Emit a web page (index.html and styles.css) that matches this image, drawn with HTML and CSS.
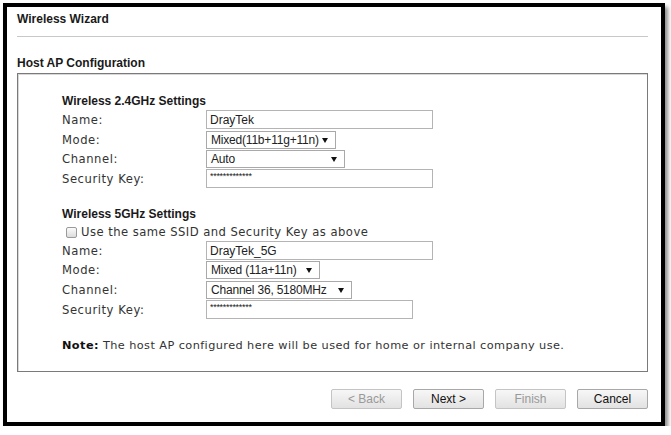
FILE: index.html
```html
<!DOCTYPE html>
<html>
<head>
<meta charset="utf-8">
<link rel="stylesheet" href="styles.css">
</head>
<body>
<div class="frame">
  <div class="title">Wireless Wizard</div>
  <div class="rule"></div>
  <div class="section-title">Host AP Configuration</div>
  <div class="box">
    <div class="group-title">Wireless 2.4GHz Settings</div>
    <div class="form">
      <div class="lbl">Name:</div>
      <div class="ctl"><input class="txt w227" type="text" value="DrayTek"></div>
      <div class="lbl">Mode:</div>
      <div class="ctl"><span class="sel w130">Mixed(11b+11g+11n)</span></div>
      <div class="lbl">Channel:</div>
      <div class="ctl"><span class="sel w139">Auto</span></div>
      <div class="lbl">Security Key:</div>
      <div class="ctl"><input class="txt key w227" type="text" value="*************"></div>
    </div>

    <div class="group-title g2">Wireless 5GHz Settings</div>
    <label class="check"><span class="cb"></span>Use the same SSID and Security Key as above</label>
    <div class="form">
      <div class="lbl">Name:</div>
      <div class="ctl"><input class="txt w227" type="text" value="DrayTek_5G"></div>
      <div class="lbl">Mode:</div>
      <div class="ctl"><span class="sel w114">Mixed (11a+11n)</span></div>
      <div class="lbl">Channel:</div>
      <div class="ctl"><span class="sel w146">Channel 36, 5180MHz</span></div>
      <div class="lbl">Security Key:</div>
      <div class="ctl"><input class="txt key w207" type="text" value="*************"></div>
    </div>

    <p class="note"><b>Note:</b> The host AP configured here will be used for home or internal company use.</p>
  </div>
  <div class="buttons">
    <button class="btn" disabled>&lt; Back</button>
    <button class="btn">Next &gt;</button>
    <button class="btn" disabled>Finish</button>
    <button class="btn">Cancel</button>
  </div>
</div>
</body>
</html>
```

FILE: styles.css
```css
html, body {
  margin: 0;
  padding: 0;
  background: #fff;
}
body {
  font-family: "Liberation Sans", Arial, sans-serif;
  font-size: 12px;
  color: #222;
}
.frame {
  margin: 3px 0 0 3px;
  height: 415px;
  border: 4px solid #000;
  box-shadow: 3px 4px 4px rgba(0, 0, 0, 0.45);
  padding: 0 13px 0 10px;
  box-sizing: content-box;
  width: 631px;
}
.title {
  font-weight: bold;
  padding-top: 5px;
  height: 19px;
  line-height: 14px;
  color: #1a1a1a;
}
.rule {
  height: 1px;
  background: #c8c8c8;
  margin-top: 5px;
}
.section-title {
  font-weight: bold;
  margin-top: 19px;
  line-height: 14px;
  height: 17px;
  color: #1a1a1a;
}
.box {
  border: 1px solid #7a7a7a;
  box-shadow: inset 1px 1px 0 #d8d8d8;
  padding: 20px 0 0 44px;
  box-sizing: content-box;
  height: 277px;
}
.group-title {
  font-weight: bold;
  line-height: 14px;
  height: 16px;
  color: #1a1a1a;
}
.group-title.g2 {
  margin-top: 18px;
}
.form {
  display: grid;
  grid-template-columns: 144px auto;
  grid-auto-rows: 19.7px;
  align-items: center;
  font-family: "DejaVu Sans", Verdana, sans-serif;
  color: #333;
}
.lbl {
  font-size: 11.6px;
  line-height: 14px;
  letter-spacing: 0.55px;
}
.ctl {
  display: flex;
  align-items: center;
}
.txt {
  height: 19px;
  box-sizing: border-box;
  border: 1px solid #b4b4b4;
  padding: 0 3px;
  font-family: "Liberation Sans", Arial, sans-serif;
  font-size: 12px;
  color: #222;
  margin: 0;
  outline: none;
}
.txt.key {
  font-size: 9px;
  padding-bottom: 6px;
  letter-spacing: -0.3px;
}
.w227 { width: 227px; }
.w207 { width: 207px; }
.sel {
  position: relative;
  display: block;
  height: 18px;
  box-sizing: border-box;
  border: 1px solid #a9a9a9;
  padding: 0 0 0 4px;
  line-height: 16px;
  font-family: "Liberation Sans", Arial, sans-serif;
  font-size: 12px;
  letter-spacing: -0.2px;
  color: #222;
  background: #fff;
}
.sel::after {
  content: "";
  position: absolute;
  right: 7px;
  top: 6px;
  border-left: 3px solid transparent;
  border-right: 3px solid transparent;
  border-top: 5px solid #111;
}
.w130 { width: 130px; }
.w139 { width: 139px; }
.w114 { width: 114px; }
.w146 { width: 146px; }
.check {
  display: flex;
  align-items: center;
  height: 19px;
  font-family: "DejaVu Sans", Verdana, sans-serif;
  font-size: 11.6px;
  letter-spacing: 0.45px;
  color: #333;
  margin-bottom: -1px;
}
.cb {
  width: 11px;
  height: 11px;
  box-sizing: border-box;
  border: 1px solid #9a9a9a;
  border-radius: 2px;
  background: linear-gradient(#fbfbfb, #dcdcdc);
  margin: 0 4px 0 4px;
}
.note {
  margin: 19px 0 0 0;
  font-family: "DejaVu Sans", Verdana, sans-serif;
  font-size: 11.3px;
  letter-spacing: 0.42px;
  color: #333;
  line-height: 14px;
}
.note b {
  color: #111;
}
.buttons {
  display: flex;
  justify-content: flex-end;
  gap: 11px;
  margin-top: 17px;
}
.btn {
  width: 71px;
  height: 20px;
  box-sizing: border-box;
  border: 1px solid #a8a8a8;
  border-radius: 2px;
  background: linear-gradient(#f7f7f7, #e2e2e2);
  font-family: "Liberation Sans", Arial, sans-serif;
  font-size: 12px;
  color: #111;
  padding: 0;
  margin: 0;
}
.btn:disabled {
  color: #999;
  border-color: #c4c4c4;
}
```
